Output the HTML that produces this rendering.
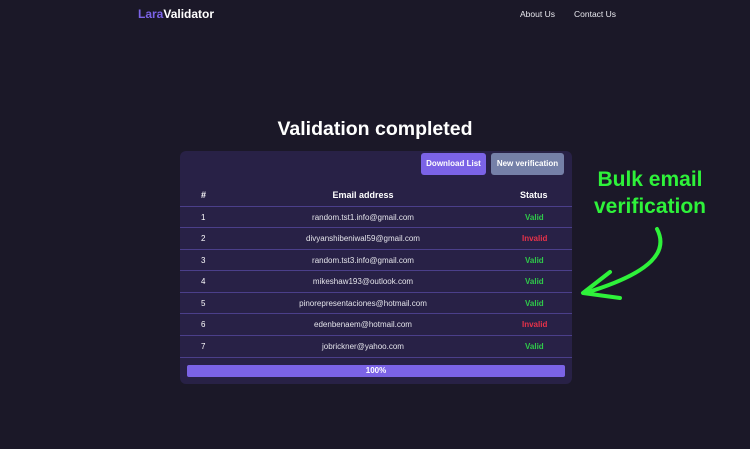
<!DOCTYPE html>
<html><head><style>
body{margin:0;width:750px;height:449px;background:#1b1828;font-family:"Liberation Sans",sans-serif;position:relative;overflow:hidden;color:#fff}
.logo{position:absolute;left:138px;top:7px;font-size:12px;font-weight:bold}
.logo span{color:#7b63e6}
.nav{position:absolute;top:9px;font-size:8.5px;color:#e8e8ee}
h1{position:absolute;left:0;width:750px;top:118px;margin:0;text-align:center;font-size:19.5px;font-weight:bold}
.card{position:absolute;left:180px;top:151px;width:392px;height:233px;background:#282146;border-radius:6px}
.btn{position:absolute;top:153px;height:22px;line-height:22px;font-size:8px;font-weight:bold;border-radius:3px;text-align:center}
.row{position:absolute;left:180px;width:392px;height:21px;border-top:1px solid #4b3f8a;font-size:8px;line-height:21px}
.row div{position:absolute}
.n{left:21px}.e{left:0;width:366px;text-align:center;color:#e4e4ea}.s{left:345px;font-weight:bold}
.v{color:#2fc94a}.i{color:#e8324a;left:342px}
</style></head><body>
<div class="logo"><span>Lara</span>Validator</div>
<div class="nav" style="left:520px">About Us</div>
<div class="nav" style="left:574px">Contact Us</div>
<h1>Validation completed</h1>
<div class="card"></div>
<div class="btn" style="left:421px;width:65px;background:#7b63e6">Download List</div>
<div class="btn" style="left:491px;width:73px;background:#7580a8">New verification</div>
<div style="position:absolute;top:190px;left:201px;font-size:9px;font-weight:bold">#</div>
<div style="position:absolute;top:190px;left:180px;width:366px;text-align:center;font-size:9px;font-weight:bold">Email address</div>
<div style="position:absolute;top:190px;left:520px;font-size:9px;font-weight:bold">Status</div>
<div class="row" style="top:206px"><div class="n">1</div><div class="e">random.tst1.info@gmail.com</div><div class="s v">Valid</div></div>
<div class="row" style="top:227px"><div class="n">2</div><div class="e">divyanshibeniwal59@gmail.com</div><div class="s i">Invalid</div></div>
<div class="row" style="top:249px"><div class="n">3</div><div class="e">random.tst3.info@gmail.com</div><div class="s v">Valid</div></div>
<div class="row" style="top:270px"><div class="n">4</div><div class="e">mikeshaw193@outlook.com</div><div class="s v">Valid</div></div>
<div class="row" style="top:292px"><div class="n">5</div><div class="e">pinorepresentaciones@hotmail.com</div><div class="s v">Valid</div></div>
<div class="row" style="top:313px"><div class="n">6</div><div class="e">edenbenaem@hotmail.com</div><div class="s i">Invalid</div></div>
<div class="row" style="top:335px"><div class="n">7</div><div class="e">jobrickner@yahoo.com</div><div class="s v">Valid</div></div>
<div style="position:absolute;left:180px;top:357px;width:392px;border-top:1px solid #4b3f8a"></div>
<div style="position:absolute;left:187px;top:365px;width:378px;height:12px;background:#7b63e6;border-radius:2px;font-size:8px;font-weight:bold;text-align:center;line-height:12px">100%</div>
<div style="position:absolute;left:575px;top:166px;width:150px;text-align:center;color:#2ef23a;font-size:21px;font-weight:bold;line-height:27px">Bulk email<br>verification</div>
<svg style="position:absolute;left:0;top:0" width="750" height="449">
<path d="M657 229 C668 250 655 272 585 293" fill="none" stroke="#2ef23a" stroke-width="4" stroke-linecap="round"/>
<path d="M610 272 L583 293 L620 298" fill="none" stroke="#2ef23a" stroke-width="4" stroke-linecap="round" stroke-linejoin="round"/>
</svg>
</body></html>
